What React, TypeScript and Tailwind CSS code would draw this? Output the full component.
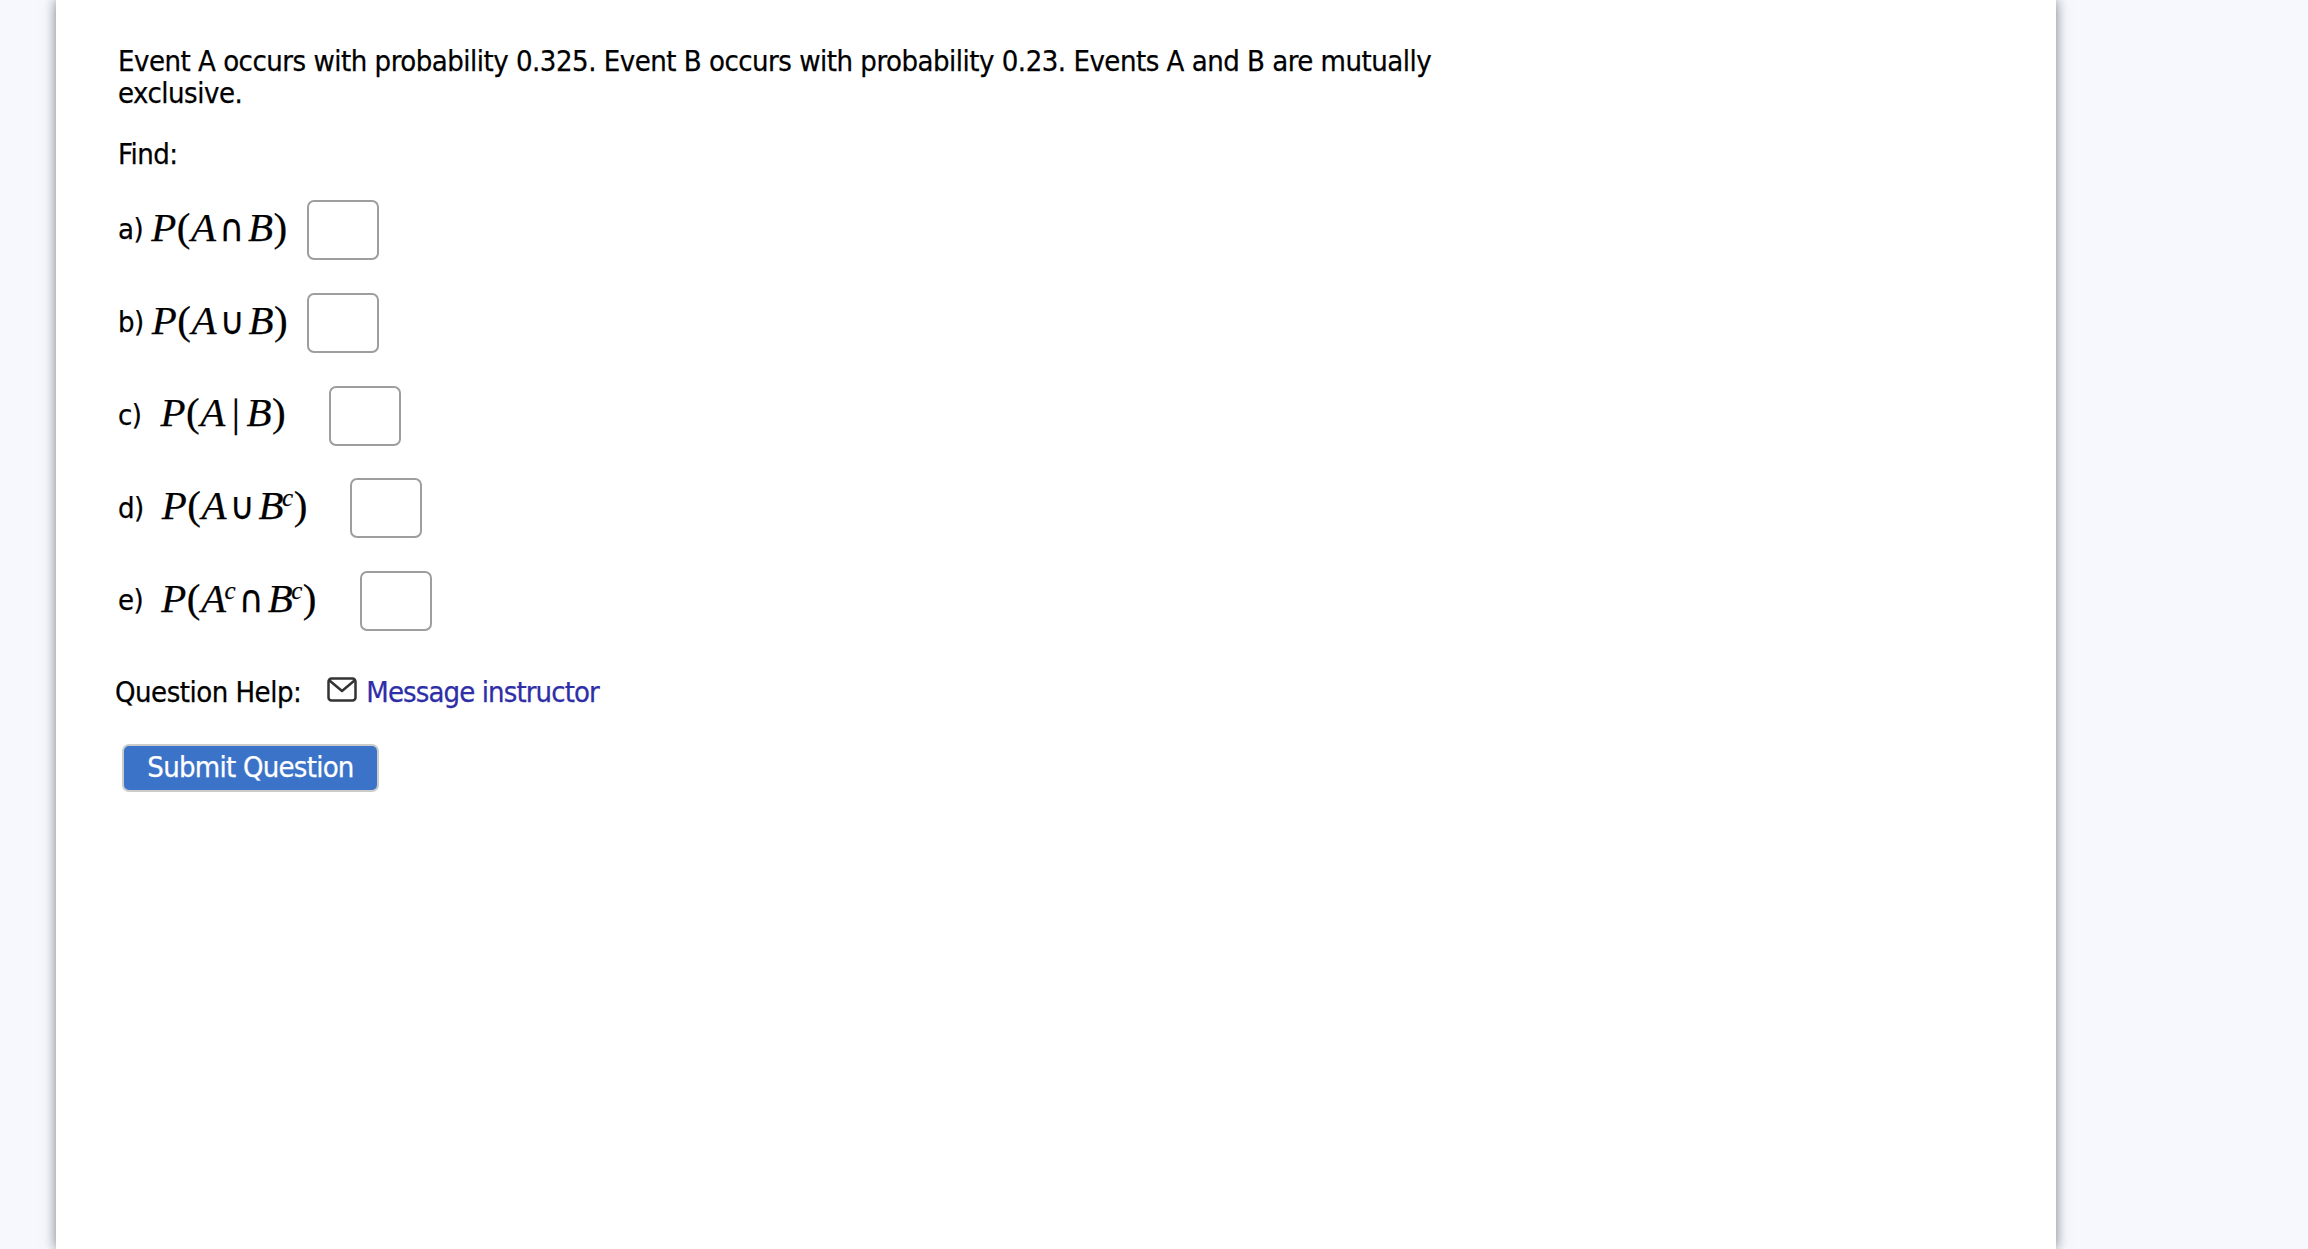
const ROWS = [
  { label: "a)", gap: "ml-[8px]", boxGap: "ml-[19px]", math: "cap" },
  { label: "b)", gap: "ml-[8px]", boxGap: "ml-[19px]", math: "cup" },
  { label: "c)", gap: "ml-[19px]", boxGap: "ml-[43px]", math: "given" },
  { label: "d)", gap: "ml-[18px]", boxGap: "ml-[42px]", math: "cupc" },
  { label: "e)", gap: "ml-[18px]", boxGap: "ml-[43px]", math: "capc" },
];

function I({ children }: { children: React.ReactNode }) {
  return <span className="italic">{children}</span>;
}

function Sup() {
  return <span className="relative -top-[13px] -ml-[2px] text-[25px] italic leading-none">c</span>;
}

function Op({ children }: { children: React.ReactNode }) {
  return <span className="mx-[3px] font-['DejaVu_Sans',sans-serif] text-[38px] leading-none">{children}</span>;
}

function Math({ kind }: { kind: string }) {
  return (
    <span className="font-['Liberation_Serif',serif] text-[41px] leading-none tracking-[0.5px] whitespace-nowrap">
      <I>P</I>(<I>A</I>
      {kind === "capc" && <Sup />}
      {(kind === "cap" || kind === "capc") && <Op>∩</Op>}
      {(kind === "cup" || kind === "cupc") && <Op>∪</Op>}
      {kind === "given" && <span className="mx-[6px]">|</span>}
      <I>B</I>
      {(kind === "cupc" || kind === "capc") && <Sup />})
    </span>
  );
}

export default function App() {
  return (
    <div className="min-h-screen bg-[#f6f8fe] font-['DejaVu_Sans',sans-serif] text-black tracking-[-0.5px] [font-stretch:condensed] [-webkit-text-stroke:0.25px]">
      <div className="ml-[56px] w-[2000px] min-h-screen bg-white pl-[62px] pt-[45px] shadow-[0_0_12px_rgba(0,0,0,0.5)]">
        <p className="w-[1340px] text-[29px] leading-[32px]">
          Event A occurs with probability 0.325. Event B occurs with probability 0.23. Events A and B are mutually exclusive.
        </p>
        <p className="mt-[29px] text-[29px] leading-[32px]">Find:</p>
        <div className="mt-[30px] flex flex-col gap-[32.75px]">
          {ROWS.map((r) => (
            <div key={r.label} className="flex h-[60px] items-center text-[29px]">
              <span>{r.label}</span>
              <span className={r.gap}>
                <Math kind={r.math} />
              </span>
              <input type="text" aria-label={r.label} className={"h-[60px] w-[72px] rounded-[7px] border-[2.5px] border-[#9e9e9e] bg-white " + r.boxGap} />
            </div>
          ))}
        </div>
        <div className="mt-[46px] flex h-[32px] items-center -ml-[3px] text-[29px]">
          <span>Question Help:</span>
          <svg className="ml-[26px] -mt-[6px]" width="30" height="26" viewBox="0 0 30 26" fill="none" stroke="#333" strokeWidth="2.5" strokeLinejoin="round">
            <rect x="1.5" y="1.5" width="27" height="22" rx="3" />
            <path d="M2.5 3.5 15 14 27.5 3.5" />
          </svg>
          <a href="#" className="ml-[9px] tracking-[-0.9px] text-[#2e2ea8]">Message instructor</a>
        </div>
        <button className="mt-[35px] ml-[4px] flex h-[48px] w-[257px] items-center justify-center rounded-[7px] border-[2.5px] border-[#cccccc] bg-[#3b73c9] text-[29px] tracking-[-0.75px] text-white">
          Submit Question
        </button>
      </div>
    </div>
  );
}
